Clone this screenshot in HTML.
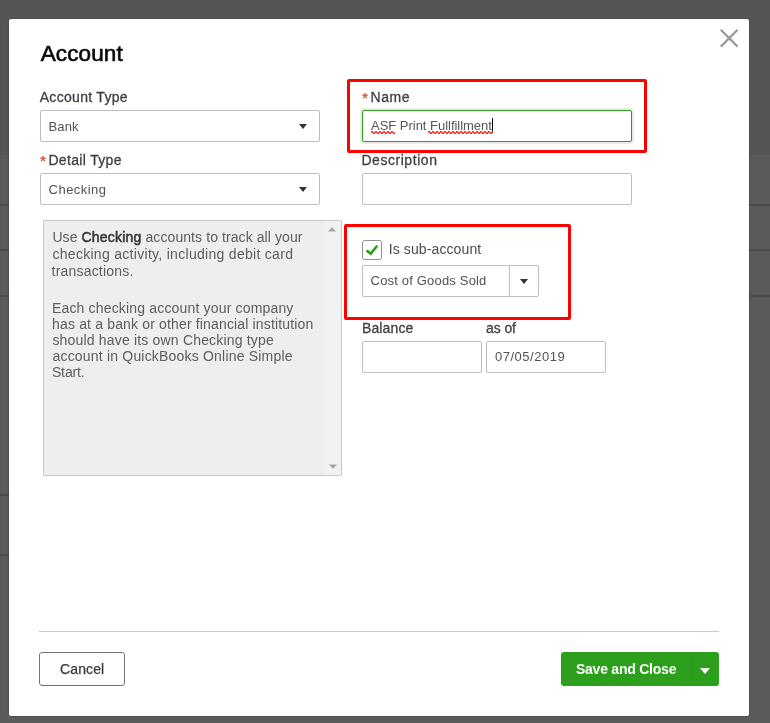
<!DOCTYPE html>
<html lang="en">
<head>
<meta charset="utf-8">
<title>Account</title>
<style>
  html, body { margin: 0; padding: 0; }
  body {
    width: 770px; height: 723px; overflow: hidden; position: relative;
    background: #5a5a5a;
    font-family: "Liberation Sans", sans-serif;
    color: #393a3d;
  }
  .abs { position: absolute; }
  /* dimmed page behind the modal */
  .band-top { left: 0; top: 0; width: 770px; height: 155px; background: #555557; }
  .bgline { height: 2px; background: #494a4e; }
  /* modal */
  .modal {
    left: 9px; top: 19px; width: 740px; height: 697px;
    background: #fff; border-radius: 2px;
    box-shadow: 0 0 2px rgba(0,0,0,0.35);
  }
  .title { left: 41px; top: 41px; font-size: 22.5px; line-height: 26px; color: #0a0a0a; letter-spacing: 0.3px; -webkit-text-stroke: 0.65px #0a0a0a; white-space: nowrap; }
  .label { font-size: 14px; line-height: 16px; color: #3d3e42; white-space: nowrap; -webkit-text-stroke: 0.28px #3d3e42; letter-spacing: 0.1px; }
  .req { position: absolute; left: 0; top: -1.6px; color: #d8432c; -webkit-text-stroke: 0.25px #d8432c; font-size: 15.5px; line-height: 22px; letter-spacing: 0; }
  .field {
    box-sizing: border-box; height: 32px; border: 1px solid #babec5; border-radius: 2px; background: #fff;
    font-size: 13px; line-height: 30px; color: #515256; padding-left: 8px; white-space: nowrap; letter-spacing: 0.15px;
  }
  .caret-dn { width: 0; height: 0; border-left: 4px solid transparent; border-right: 4px solid transparent; border-top: 5px solid #333; }
  .redbox { box-sizing: border-box; border: 3px solid #ff0000; border-radius: 2px; }
  .desc {
    left: 43px; top: 220px; width: 299px; height: 256px; box-sizing: border-box;
    border: 1px solid #c9c9c9; background: #eeeeee; border-radius: 1px;
  }
  .desc .track { position: absolute; right: 0; top: 0; width: 17px; height: 100%; background: #f1f1f1; }
  .desc .ln { position: absolute; left: 8px; font-size: 14px; line-height: 17px; color: #5c5d61; letter-spacing: 0.12px; white-space: nowrap; }
  .desc b { font-weight: normal; color: #36373a; -webkit-text-stroke: 0.55px #36373a; letter-spacing: 0.2px; }
  .hr { left: 39px; top: 631px; width: 680px; height: 1px; background: #c8c8c8; }
  .btn-cancel {
    left: 39px; top: 652px; width: 86px; height: 34px; box-sizing: border-box;
    border: 1px solid #74757b; border-radius: 3px; background: #fff;
    font-size: 14px; line-height: 32px; text-align: center; color: #393a3d; -webkit-text-stroke: 0.25px #393a3d;
  }
  .btn-save {
    left: 561px; top: 652px; width: 158px; height: 34px; border-radius: 3px; background: #2ca01c;
    color: #fff; font-weight: bold; font-size: 14px; line-height: 34px; letter-spacing: -0.3px;
  }
</style>
<style id="fit">
#t_title { letter-spacing: 0.125px; position: relative; left: -0.35px; }
#t_acct { letter-spacing: 0.305px; position: relative; left: -1.31px; }
#t_detail { letter-spacing: 0.332px; position: relative; left: -0.61px; }
#t_name { letter-spacing: 0.577px; position: relative; left: -0.56px; }
#t_bank { letter-spacing: 0.089px; position: relative; left: -0.44px; }
#t_checking { letter-spacing: 0.450px; position: relative; left: -0.40px; }
#t_asf { letter-spacing: -0.028px; position: relative; left: 0.08px; }
#t_desc { letter-spacing: 0.551px; position: relative; left: -0.61px; }
#t_issub { letter-spacing: 0.115px; position: relative; left: -0.35px; }
#t_cogs { letter-spacing: 0.178px; position: relative; left: -0.41px; }
#t_balance { letter-spacing: 0.150px; position: relative; left: -0.11px; }
#t_asof { letter-spacing: -0.119px; position: relative; left: 0.10px; }
#t_date { letter-spacing: 0.533px; position: relative; left: -0.14px; }
#t_cancel { letter-spacing: 0.089px; position: relative; left: 0.16px; }
#t_save { letter-spacing: -0.228px; position: relative; left: -1.09px; }
#ln0 { letter-spacing: 0.086px; margin-left: 0.39px; }
#ln1 { letter-spacing: 0.295px; margin-left: 0.43px; }
#ln2 { letter-spacing: 0.193px; margin-left: -0.41px; }
#ln3 { letter-spacing: 0.170px; margin-left: -0.07px; }
#ln4 { letter-spacing: 0.157px; margin-left: 0.09px; }
#ln5 { letter-spacing: 0.180px; margin-left: 0.45px; }
#ln6 { letter-spacing: 0.194px; margin-left: 0.46px; }
#ln7 { letter-spacing: -0.121px; margin-left: -0.11px; }
</style>
</head>
<body>
<div id="root" style="position:absolute; left:0; top:0; width:770px; height:723px; will-change:transform;">
  <div class="abs band-top"></div>
  <div class="abs bgline" style="left:0; top:204px; width:770px;"></div>
  <div class="abs bgline" style="left:0; top:249px; width:770px;"></div>
  <div class="abs bgline" style="left:0; top:295px; width:770px;"></div>
  <div class="abs bgline" style="left:0; top:494px; width:20px;"></div>
  <div class="abs bgline" style="left:0; top:554px; width:20px;"></div>

  <div class="abs modal"></div>

  <div class="abs title"><span id="t_title">Account</span></div>
  <svg class="abs" style="left:718px; top:26.5px;" width="22" height="22" viewBox="0 0 22 22">
    <path d="M2.8 2.8 L19.6 19.6 M19.6 2.8 L2.8 19.6" stroke="#999a9c" stroke-width="2.3" fill="none" stroke-linecap="butt"/>
  </svg>

  <!-- left column -->
  <div class="abs label" style="left:41px; top:89px;"><span id="t_acct">Account Type</span></div>
  <div class="abs field" style="left:40px; top:110px; width:280px; padding-top:1px; line-height:29px;"><span id="t_bank">Bank</span></div>
  <div class="abs caret-dn" style="left:299px; top:124px;"></div>

  <div class="abs label" style="left:40px; top:152px;"><span class="req">*</span><span id="t_detail" style="margin-left:9px;">Detail Type</span></div>
  <div class="abs field" style="left:40px; top:173px; width:280px; padding-top:1px; line-height:29px;"><span id="t_checking">Checking</span></div>
  <div class="abs caret-dn" style="left:299px; top:187px;"></div>

  <div class="abs desc">
    <div class="track"></div>
    <div class="ln" id="ln0" style="top:8px;">Use <b>Checking</b> accounts to track all your</div>
    <div class="ln" id="ln1" style="top:25px;">checking activity, including debit card</div>
    <div class="ln" id="ln2" style="top:42px;">transactions.</div>
    <div class="ln" id="ln3" style="top:79px;">Each checking account your company</div>
    <div class="ln" id="ln4" style="top:95px;">has at a bank or other financial institution</div>
    <div class="ln" id="ln5" style="top:111px;">should have its own Checking type</div>
    <div class="ln" id="ln6" style="top:127px;">account in QuickBooks Online Simple</div>
    <div class="ln" id="ln7" style="top:143px;">Start.</div>
    <svg class="abs" style="right:5px; top:6.2px;" width="8" height="5" viewBox="0 0 8 5"><path d="M0 4.5 L4 0.3 L8 4.5 Z" fill="#a3a3a3"/></svg>
    <svg class="abs" style="right:4.5px; bottom:6px;" width="8" height="5" viewBox="0 0 8 5"><path d="M0 0.5 L8 0.5 L4 4.7 Z" fill="#a3a3a3"/></svg>
  </div>

  <!-- right column -->
  <div class="abs redbox" style="left:347px; top:79px; width:300px; height:74px;"></div>
  <div class="abs label" style="left:362px; top:89px;"><span class="req">*</span><span id="t_name" style="margin-left:9px;">Name</span></div>
  <div class="abs field" id="namefield" style="left:362px; top:110px; width:270px; border-color:#2ca01c; box-shadow:0 0 0 2px #e9ebe9; color:#55565a; letter-spacing:0;"><span id="t_asf"><span id="w1">ASF</span> Print <span id="w2">Fullfillment</span></span><span style="display:inline-block; width:1px; height:15px; background:#000; vertical-align:-3px;"></span></div>
  <svg class="abs" style="left:371px; top:129.6px;" width="24" height="4" viewBox="0 0 24 4"><path d="M0 2.5 q1 -2 2 0 t2 0 t2 0 t2 0 t2 0 t2 0 t2 0 t2 0 t2 0 t2 0 t2 0 t2 0" stroke="#ff1208" stroke-width="1.25" fill="none"/></svg>
  <svg class="abs" style="left:428px; top:129.6px;" width="65" height="4" viewBox="0 0 65 4"><path d="M0 2.5 q1 -2 2 0 t2 0 t2 0 t2 0 t2 0 t2 0 t2 0 t2 0 t2 0 t2 0 t2 0 t2 0 t2 0 t2 0 t2 0 t2 0 t2 0 t2 0 t2 0 t2 0 t2 0 t2 0 t2 0 t2 0 t2 0 t2 0 t2 0 t2 0 t2 0 t2 0 t2 0 t2 0 t2 0 " stroke="#ff1208" stroke-width="1.25" fill="none"/></svg>

  <div class="abs label" style="left:362px; top:152px;"><span id="t_desc">Description</span></div>
  <div class="abs field" style="left:362px; top:173px; width:270px;"></div>

  <div class="abs redbox" style="left:344px; top:224px; width:227px; height:96px;"></div>
  <div class="abs" style="left:362px; top:240px; width:20px; height:20px; box-sizing:border-box; border:1px solid #8d9096; border-radius:2.5px; background:#fff;"></div>
  <svg class="abs" style="left:362px; top:240px;" width="20" height="20" viewBox="0 0 20 20">
    <path d="M5.4 11.1 L8.8 13.6 L14.6 6.5" stroke="#2ca01c" stroke-width="2.6" fill="none" stroke-linecap="round" stroke-linejoin="miter"/>
  </svg>
  <div class="abs" style="left:389px; top:241px; font-size:14px; line-height:16px; color:#4a4b4f; white-space:nowrap;"><span id="t_issub">Is sub-account</span></div>
  <div class="abs field" style="left:362px; top:265px; width:177px;"><span id="t_cogs">Cost of Goods Sold</span></div>
  <div class="abs" style="left:509px; top:266px; width:1px; height:30px; background:#babec5;"></div>
  <div class="abs caret-dn" style="left:520px; top:279px;"></div>

  <div class="abs label" style="left:362px; top:320px;"><span id="t_balance">Balance</span></div>
  <div class="abs label" style="left:486px; top:320px;"><span id="t_asof">as of</span></div>
  <div class="abs field" style="left:362px; top:341px; width:120px;"></div>
  <div class="abs field" style="left:486px; top:341px; width:120px; "><span id="t_date">07/05/2019</span></div>

  <!-- footer -->
  <div class="abs hr"></div>
  <div class="abs btn-cancel"><span id="t_cancel">Cancel</span></div>
  <div class="abs btn-save">
    <span class="abs" style="left:16px; top:0; white-space:nowrap;"><span id="t_save">Save and Close</span></span>
    <span class="abs" style="left:130px; top:0; width:1px; height:34px; background:#2a9a1b;"></span>
    <span class="abs" style="left:139px; top:16px; width:0; height:0; border-left:5px solid transparent; border-right:5px solid transparent; border-top:6px solid #fff;"></span>
  </div>
</div>
</body>
</html>
